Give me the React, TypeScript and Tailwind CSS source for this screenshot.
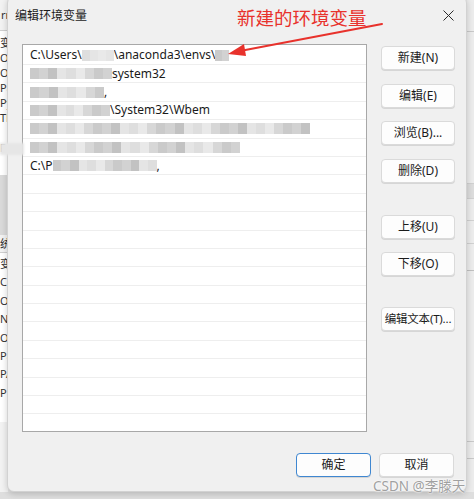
import React from "react";

const FONT = { fontFamily: "'Noto Sans', 'Noto Sans CJK SC', sans-serif" };

const SHADES = ["#d2d2d2", "#dedede", "#cacaca", "#e5e5e5", "#d7d7d7", "#c2c2c2", "#e9e9e9"];

function Mosaic({ w, light = false }: { w: number; light?: boolean }) {
  const n = Math.max(1, Math.round(w / 9));
  const blocks = Array.from({ length: n });
  return (
    <span className="inline-flex h-[11px] align-middle blur-[0.6px]" style={{ width: w }}>
      {blocks.map((_, i) => (
        <span
          key={i}
          className="h-full flex-1"
          style={{ background: light ? SHADES[[1, 3, 6, 3][i % 4]] : SHADES[(i * 5 + 2) % 7] }}
        />
      ))}
    </span>
  );
}

type Seg = string | number;

const rows: Seg[][] = [
  ["C:\\Users\\", -32, "\\anaconda3\\envs\\", 14],
  [82, "system32"],
  [74, ","],
  [80, "\\System32\\Wbem"],
  [280],
  [210],
  ["C:\\P", 104, ","],
];

function Button({ label, primary = false, w = "w-[74px]", small = false }: { label: string; primary?: boolean; w?: string; small?: boolean }) {
  return (
    <div
      className={`${w} h-[24px] flex items-center justify-center rounded-[4px] bg-[#fdfdfd] ${
        small ? "text-[11.5px] tracking-[-0.2px]" : "text-[12px]"
      } text-[#1b1b1b] shadow-[0_1px_0_#d6d6d6] border whitespace-nowrap ${
        primary ? "border-[#3f87d1] border-[1.5px]" : "border-[#dadada]"
      }`}
    >
      {label}
    </div>
  );
}

const leftTop = ["变", "Oi", "Oi", "Pa", "Py", "TE", "", "P"];
const leftBot = ["统", "变", "Co", "Or", "NI", "OS", "Pa", "PA", "PF"];

export default function App() {
  const totalRows = 21;
  return (
    <div className="relative w-[474px] h-[499px] overflow-hidden bg-[#e4e4e4]" style={FONT}>
      {/* background window, left strip */}
      <div className="absolute left-0 top-0 w-[8px] h-[499px] overflow-hidden bg-[#f2f2f2] text-[11px] text-[#333]">
        <div className="h-[31px] border-b border-[#cfcfcf] pt-[8px] pl-[1px] leading-[14px]">rn</div>
        <div className="bg-white flex flex-col pt-[4px]">
          {leftTop.map((t, i) => (
            <div key={i} className="h-[15px] leading-[15px] whitespace-nowrap">{t}</div>
          ))}
          <div className="h-[20px]" />
        </div>
        <div className="h-[60px] bg-[#d9d9d9]" />
        <div className="h-[18px] leading-[16px] pt-[1px] border-b border-[#cfcfcf]">{leftBot[0]}</div>
        <div className="bg-white flex flex-col pt-[2px]">
          {leftBot.slice(1).map((t, i) => (
            <div key={i} className="h-[18.4px] leading-[18px] whitespace-nowrap">{t}</div>
          ))}
          <div className="h-[20px]" />
        </div>
      </div>

      {/* background window, right strip */}
      <div className="absolute right-0 top-0 w-[8px] h-[499px] bg-[#ececec] flex flex-col">
        <div className="h-[32px] border-b border-[#c8c8c8]" />
        <div className="h-[152px] border-b border-[#d0d0d0]" />
        <div className="h-[15px] bg-[#dcdcdc] border-b border-[#d0d0d0]" />
        <div className="h-[22px] border-b border-[#d0d0d0]" />
        <div className="h-[23px] border-b border-[#d0d0d0]" />
        <div className="h-[27px] border-b border-[#c0c0c0]" />
        <div className="h-[171px] border-b border-[#c8c8c8]" />
        <div className="h-[17px] border-b border-[#c8c8c8]" />
      </div>

      {/* bottom strip below dialog */}
      <div className="absolute left-0 bottom-0 w-[474px] h-[7px] bg-[#dedede]" />

      {/* dialog window */}
      <div className="absolute left-[7px] top-[-4px] w-[460px] h-[496px] rounded-[7px] bg-[#f0f0f0] border border-[#d2d2d2] shadow-[0_2px_6px_rgba(0,0,0,0.18)] flex flex-col">
        <div className="h-[34px] flex items-center justify-between pl-[7px] pr-[9px] pt-[3px]">
          <span className="text-[12px] text-[#1b1b1b]">编辑环境变量</span>
          <svg width="11" height="11" viewBox="0 0 11 11" className="mr-[3px]">
            <path d="M0.5 0.5 L10.5 10.5 M10.5 0.5 L0.5 10.5" stroke="#2b2b2b" strokeWidth="1" />
          </svg>
        </div>

        <div className="flex pl-[14px] pt-[13px] gap-[14px]">
          <div className="w-[345px] h-[388px] bg-white border border-[#a8a8a8] overflow-hidden pt-[1px]">
            {Array.from({ length: totalRows }).map((_, i) => {
              const segs = rows[i];
              return (
                <div
                  key={i}
                  className={`${i === 0 ? "h-[19px]" : "h-[18.4px]"} flex items-center pl-[7px] border-b border-[#eeeeee] text-[12px] text-[#1a1a1a] whitespace-nowrap`}
                >
                  {segs?.map((s, j) =>
                    typeof s === "string" ? (
                      <span key={j}>{s}</span>
                    ) : (
                      <Mosaic key={j} w={Math.abs(s)} light={s < 0} />
                    )
                  )}
                </div>
              );
            })}
          </div>

          <div className="flex flex-col pt-[2px]">
            <div className="flex flex-col gap-[13.5px]">
              <Button label="新建(N)" />
              <Button label="编辑(E)" />
              <Button label="浏览(B)..." />
              <Button label="删除(D)" />
            </div>
            <div className="flex flex-col gap-[13px] mt-[32px]">
              <Button label="上移(U)" />
              <Button label="下移(O)" />
            </div>
            <div className="mt-[31px]">
              <Button label="编辑文本(T)..." small />
            </div>
          </div>
        </div>

        <div className="flex justify-end gap-[8px] pr-[12px] pt-[21px]">
          <Button label="确定" primary w="w-[75px]" />
          <Button label="取消" w="w-[75px]" />
        </div>
      </div>

      {/* mosaic spilling over dialog edge */}
      <div className="absolute left-0 top-[143px] w-[24px] h-[12px] bg-[#e6e6e6] blur-[1px]" />

      {/* annotation */}
      <div
        className="absolute left-[237px] top-[4px] text-[18.5px] leading-[26px] text-[#e8322c]"
        style={{ fontFamily: "'Noto Sans CJK SC', sans-serif" }}
      >
        新建的环境变量
      </div>
      <svg className="absolute left-0 top-0" width="474" height="499" viewBox="0 0 474 499">
        <line x1="382" y1="24" x2="240" y2="51" stroke="#e8322c" strokeWidth="2" strokeLinecap="round" />
        <polygon points="228,54 244,44 246,56" fill="#e8322c" />
      </svg>

      {/* watermark */}
      <div
        className="absolute left-[373px] top-[478px] text-[13.5px] leading-[16px] text-[#a0a0a0] whitespace-nowrap"
        style={{ textShadow: "0 0 2px #fff, 0 0 2px #fff" }}
      >
        CSDN @李滕天
      </div>
    </div>
  );
}
